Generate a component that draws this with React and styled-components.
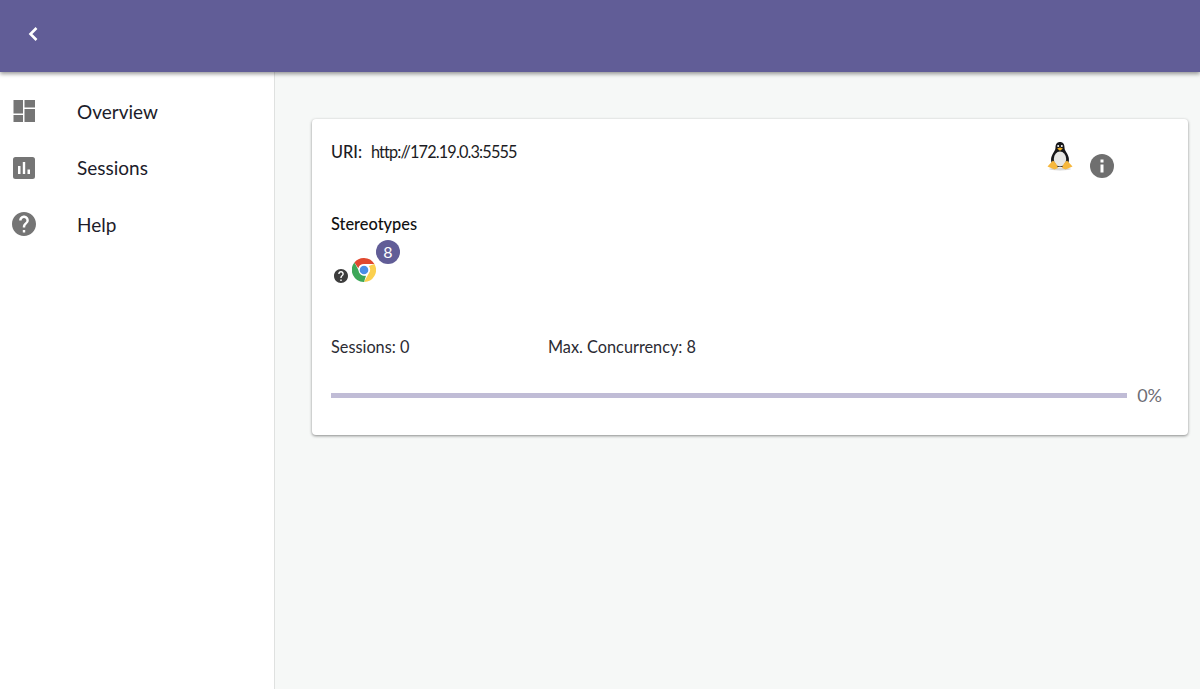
import React from "react";
import styled, { createGlobalStyle } from "styled-components";

const Global = createGlobalStyle`
  html, body { margin: 0; padding: 0; height: 100%; }
  body { font-family: Lato, "Noto Sans", sans-serif; color: #1c1c24; background: #f6f8f7; }
`;

const Page = styled.div`
  display: flex;
  flex-direction: column;
  height: 689px;
  overflow: hidden;
`;

const TopBar = styled.header`
  flex: none;
  height: 72px;
  background: #615d97;
  display: flex;
  align-items: center;
  padding: 0 0 4px 23px;
  box-sizing: border-box;
  box-shadow: 0 2px 4px rgba(0, 0, 0, 0.4);
  position: relative;
  z-index: 2;
`;

const BackButton = styled.button`
  border: 0;
  background: none;
  padding: 0;
  width: 20px;
  height: 24px;
  display: flex;
  align-items: center;
  justify-content: center;
`;

const Body = styled.div`
  flex: 1;
  display: flex;
  min-height: 0;
`;

const Sidebar = styled.nav`
  flex: none;
  width: 274px;
  background: #fff;
  border-right: 1px solid #dfe1e0;
  padding-top: 11px;
`;

const NavItem = styled.a`
  display: flex;
  align-items: center;
  height: 56.500px;
  padding-left: 12px;
  font-size: 19px;
  color: #1c1c2a;
`;

const NavIcon = styled.span`
  width: 65px;
  flex: none;
  display: flex;
  align-items: center;
  color: #757575;
`;

const Main = styled.main`
  flex: 1;
  padding: 47px 12px 0 37px;
`;

const Card = styled.section`
  background: #fff;
  border-radius: 4px;
  height: 316px;
  box-sizing: border-box;
  padding: 20px 26px 0 19px;
  box-shadow: 0 1px 3px rgba(0, 0, 0, 0.45);
  display: flex;
  flex-direction: column;
`;

const UriRow = styled.div`
  display: flex;
  justify-content: space-between;
  height: 59px;
`;

const Uri = styled.div`
  font-size: 16.300px;
  line-height: 26px;
  display: flex;
  gap: 9px;
`;

const Label = styled.span`
  font-weight: 500;
`;

const Address = styled.span`
  letter-spacing: -0.850px;
`;

const OsIcons = styled.div`
  display: flex;
  align-items: flex-start;
  gap: 17px;
  margin-right: 48px;
`;

const InfoIcon = styled.span`
  display: block;
  margin-top: 15px;
  height: 24px;
`;

const Heading = styled.h3`
  margin: 14px 0 0;
  font-size: 16.400px;
  line-height: 24px;
  font-weight: 500;
  color: #111;
`;

const Stereotypes = styled.div`
  display: flex;
  align-items: flex-end;
  height: 44px;
  margin-top: 2px;
  padding-left: 3px;
`;

const Unknown = styled.span`
  display: block;
  height: 14px;
  margin-bottom: 1px;
  margin-right: 4px;
`;

const BrowserIcon = styled.span`
  position: relative;
  display: block;
  width: 24px;
  height: 24px;
`;

const Count = styled.span`
  position: absolute;
  left: 24px;
  top: -18px;
  width: 24px;
  height: 24px;
  border-radius: 50%;
  background: #615d97;
  color: #fff;
  font-size: 16px;
  line-height: 24px;
  text-align: center;
`;

const Stats = styled.div`
  display: flex;
  margin-top: 53px;
  font-size: 16.300px;
  line-height: 24px;
  color: #2b2b33;
`;

const Stat = styled.span`
  width: 217px;
`;

const ProgressRow = styled.div`
  display: flex;
  align-items: center;
  margin-top: 25px;
`;

const Track = styled.div`
  flex: 1;
  height: 5px;
  background: #c0bcd6;
`;

const Percent = styled.span`
  width: 35px;
  text-align: right;
  font-size: 18px;
  color: #6d6d75;
`;

const DashboardIcon = () => (
  <svg width="24" height="24" viewBox="0 0 24 24" fill="currentColor">
    <path d="M1.500 1h9.500v13.500H1.500zM12.500 1H23v7.500H12.500zM1.500 16H11v7H1.500zM12.500 10H23v13H12.500z" />
  </svg>
);

const ChartIcon = () => (
  <svg width="24" height="24" viewBox="0 0 24 24" fill="currentColor">
    <path fillRule="evenodd" d="M3.500 1h17A2.500 2.500 0 0 1 23 3.500v17a2.500 2.500 0 0 1-2.500 2.500h-17A2.500 2.500 0 0 1 1 20.500v-17A2.500 2.500 0 0 1 3.500 1zM6 10v8h2.500v-8zM10.800 6v12h2.400V6zM15.500 13.500V18H18v-4.500z" />
  </svg>
);

const HelpIcon = ({ size = 24, color = "currentColor" }) => (
  <svg width={size} height={size} viewBox="2 2 20 20" fill={color}>
    <path d="M12 2C6.480 2 2 6.480 2 12s4.480 10 10 10 10-4.480 10-10S17.520 2 12 2zm1 17h-2v-2h2v2zm2.070-7.750-.9.920C13.450 12.900 13 13.500 13 15h-2v-.5c0-1.100.450-2.100 1.170-2.830l1.240-1.260c.370-.360.590-.860.590-1.410 0-1.100-.9-2-2-2s-2 .9-2 2H8c0-2.210 1.790-4 4-4s4 1.790 4 4c0 .880-.360 1.680-.930 2.250z" />
  </svg>
);

const InfoGlyph = () => (
  <svg width="24" height="24" viewBox="0 0 24 24">
    <circle cx="12" cy="12" r="12" fill="#6f6f6f" />
    <rect x="10.500" y="10.500" width="3" height="8" fill="#fff" />
    <rect x="10.500" y="5.500" width="3" height="3" fill="#fff" />
  </svg>
);

const Tux = () => (
  <svg width="26" height="32" viewBox="0 0 26 32">
    <ellipse cx="13" cy="30" rx="11" ry="1.500" fill="#d8d8d8" />
    <path d="M13 3c3 0 4.500 2.200 4.500 5.500 0 2.500 1.200 3.700 2.700 6.200 1.600 2.800 2.300 5.800 1.300 8.800l-3 4.500H7.500l-3-4.500c-1-3-.3-6 1.300-8.800C7.300 12.200 8.500 11 8.500 8.500 8.500 5.200 10 3 13 3z" fill="#17171a" />
    <ellipse cx="13" cy="20" rx="6.200" ry="7.500" fill="#e6e6e4" />
    <circle cx="11.200" cy="7" r="1" fill="#fff" />
    <circle cx="14.800" cy="7" r="1" fill="#fff" />
    <path d="M10 9.500 13 8.500l3 1-3 2.300z" fill="#f5b324" />
    <path d="M6 21.500.5 27.500l7 3 3.500-1.500c-.8-3-2.500-5.700-5-7.500zM20 21.500l5.500 6-7 3-3.500-1.500c.8-3 2.500-5.700 5-7.500z" fill="#f6b73c" />
  </svg>
);

const Chrome = () => (
  <svg width="24" height="24" viewBox="0 0 24 24">
    <path d="M12 0a12 12 0 0 1 10.400 6H12a6 6 0 0 0-5.700 4.200L2.400 4.600A12 12 0 0 1 12 0z" fill="#e0492f" />
    <path d="M22.400 6A12 12 0 0 1 12 24l4.800-8.700A6 6 0 0 0 16.800 8z" fill="#fbd04f" />
    <path d="M2.400 4.600 6.900 12.800A6 6 0 0 0 14 17.700L12 24A12 12 0 0 1 2.400 4.600z" fill="#3da758" />
    <circle cx="12" cy="12" r="5.500" fill="#fff" />
    <circle cx="12" cy="12" r="4.300" fill="#4a8ee6" />
  </svg>
);

const navItems = [
  { label: "Overview", icon: <DashboardIcon /> },
  { label: "Sessions", icon: <ChartIcon /> },
  { label: "Help", icon: <HelpIcon /> },
];

export default function App() {
  return (
    <Page>
      <Global />
      <TopBar>
        <BackButton aria-label="Close drawer">
          <svg width="12" height="16" viewBox="0 0 12 16" fill="none" stroke="#fff" strokeWidth="2.600">
            <path d="M9.500 2 3.500 8l6 6" />
          </svg>
        </BackButton>
      </TopBar>
      <Body>
        <Sidebar>
          {navItems.map((item) => (
            <NavItem key={item.label}>
              <NavIcon>{item.icon}</NavIcon>
              {item.label}
            </NavItem>
          ))}
        </Sidebar>
        <Main>
          <Card>
            <UriRow>
              <Uri>
                <Label>URI:</Label>
                <Address>http://172.19.0.3:5555</Address>
              </Uri>
              <OsIcons>
                <Tux />
                <InfoIcon>
                  <InfoGlyph />
                </InfoIcon>
              </OsIcons>
            </UriRow>
            <Heading>Stereotypes</Heading>
            <Stereotypes>
              <Unknown>
                <HelpIcon size={14} color="#3d3d3d" />
              </Unknown>
              <BrowserIcon>
                <Chrome />
                <Count>8</Count>
              </BrowserIcon>
            </Stereotypes>
            <Stats>
              <Stat>Sessions: 0</Stat>
              <span>Max. Concurrency: 8</span>
            </Stats>
            <ProgressRow>
              <Track />
              <Percent>0%</Percent>
            </ProgressRow>
          </Card>
        </Main>
      </Body>
    </Page>
  );
}
